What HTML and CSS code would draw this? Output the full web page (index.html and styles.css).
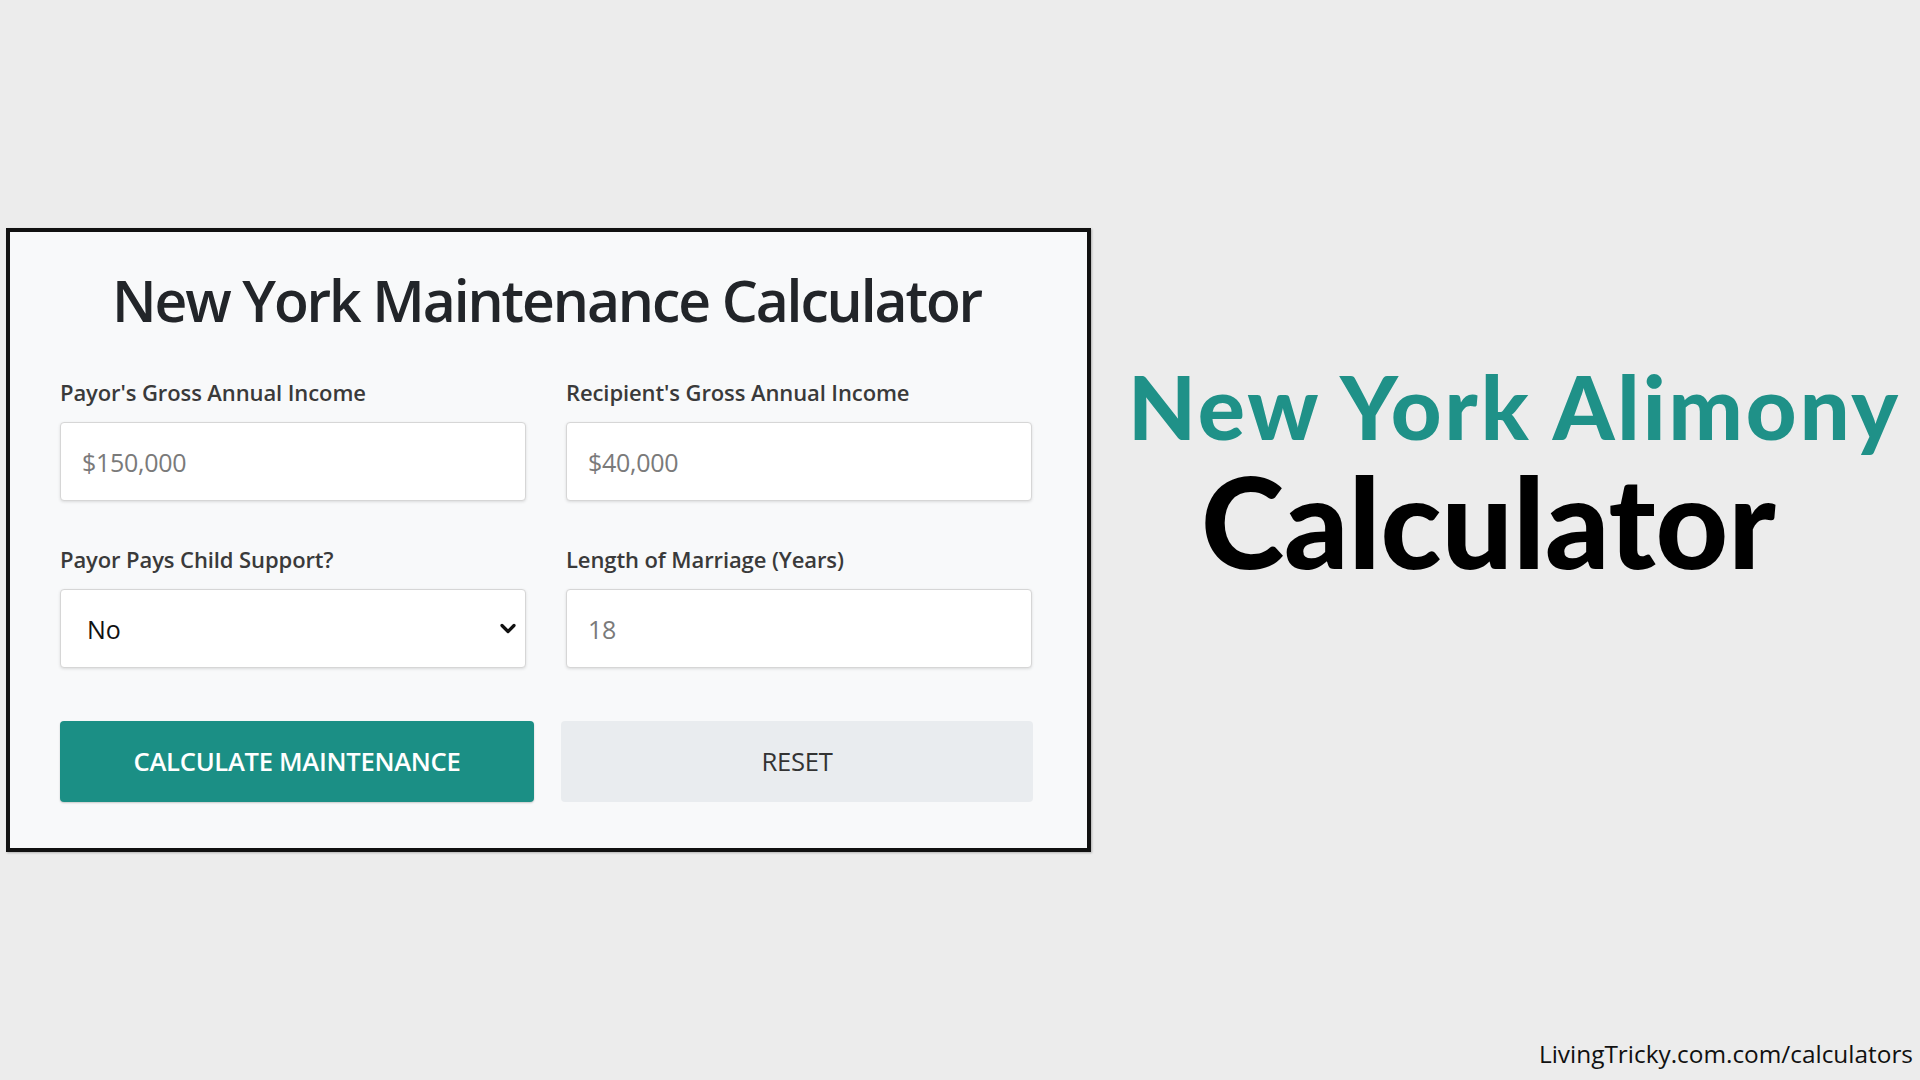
FILE: index.html
```html
<!DOCTYPE html>
<html lang="en">
<head>
<meta charset="utf-8">
<title>New York Alimony Calculator</title>
<link rel="stylesheet" href="styles.css">
</head>
<body>
<div class="page">
  <div class="stage">
    <div class="card">
      <h1 class="card-title">New York Maintenance Calculator</h1>
      <div class="fields">
        <div class="field">
          <label class="label">Payor's Gross Annual Income</label>
          <div class="input"><span class="placeholder">$150,000</span></div>
        </div>
        <div class="field">
          <label class="label">Recipient's Gross Annual Income</label>
          <div class="input"><span class="placeholder">$40,000</span></div>
        </div>
        <div class="field">
          <label class="label">Payor Pays Child Support?</label>
          <div class="input select">
            <span class="value">No</span>
            <svg class="chevron" width="20" height="12" viewBox="0 0 20 12"><path d="M4 2.5 L10 8.5 L16 2.5" fill="none" stroke="#111" stroke-width="3.2" stroke-linecap="round" stroke-linejoin="round"/></svg>
          </div>
        </div>
        <div class="field">
          <label class="label">Length of Marriage (Years)</label>
          <div class="input"><span class="placeholder">18</span></div>
        </div>
      </div>
      <div class="buttons">
        <div class="btn btn-primary">CALCULATE MAINTENANCE</div>
        <div class="btn btn-secondary">RESET</div>
      </div>
    </div>
    <div class="headline">
      <div class="headline-top">New York Alimony</div>
      <div class="headline-bottom">Calculator</div>
    </div>
  </div>
  <div class="footer">LivingTricky.com.com/calculators</div>
</div>
</body>
</html>
```

FILE: styles.css
```css
* { box-sizing: border-box; }
html, body { margin: 0; padding: 0; }
body {
  background: #ececec;
  font-family: "Open Sans", "Noto Sans", sans-serif;
  width: 1920px;
  height: 1080px;
  overflow: hidden;
}
.page {
  height: 1080px;
  display: flex;
  flex-direction: column;
}
.stage {
  display: flex;
  align-items: flex-start;
  padding-top: 228px;
  padding-left: 6px;
}
.card {
  width: 1085px;
  height: 624px;
  border: 4px solid #111;
  background: #f8f9fa;
  box-shadow: 1px 1px 2px rgba(0,0,0,0.25);
  padding: 34px 54px 0 50px;
}
.card-title {
  margin: 0;
  font-size: 57px;
  line-height: 68px;
  font-weight: 600;
  color: #222529;
  text-align: center;
  letter-spacing: -2.1px;
}
.fields {
  margin-top: 44px;
  display: grid;
  grid-template-columns: 466px 466px;
  column-gap: 40px;
  row-gap: 44px;
}
.field { display: flex; flex-direction: column; }
.label {
  font-size: 22px;
  line-height: 28px;
  font-weight: 600;
  color: #3a3a3a;
  margin-bottom: 16px;
  letter-spacing: -0.1px;
}
.input {
  height: 79px;
  background: #fff;
  border: 1px solid #d6d6d6;
  border-radius: 4px;
  box-shadow: 0 1px 3px rgba(0,0,0,0.12);
  display: flex;
  align-items: center;
  padding-left: 21px;
}
.placeholder {
  font-size: 25px;
  color: #7a7a7a;
  letter-spacing: -0.3px;
}
.select { position: relative; padding-left: 26px; }
.value {
  font-size: 25px;
  color: #111;
}
.chevron {
  position: absolute;
  right: 7px;
  top: 33px;
}
.buttons {
  margin-top: 53px;
  display: grid;
  grid-template-columns: 474px 472px;
  column-gap: 27px;
}
.btn {
  height: 81px;
  border-radius: 4px;
  display: flex;
  align-items: center;
  justify-content: center;
  font-size: 25.6px;
  font-weight: 600;
  letter-spacing: -0.3px;
}
.btn-primary {
  background: #1b8f85;
  color: #fff;
  box-shadow: 0 1px 2px rgba(0,0,0,0.2);
}
.btn-secondary {
  background: #e9ecef;
  color: #333;
  font-weight: 500;
}
.headline {
  margin-top: 130px;
  display: flex;
  flex-direction: column;
  font-family: "Lato", "Noto Sans", sans-serif;
  font-weight: 900;
}
.headline-top {
  margin-left: 37px;
  font-size: 88px;
  line-height: 96px;
  color: #1f9188;
  letter-spacing: 3px;
  white-space: nowrap;
}
.headline-bottom {
  margin-left: 110px;
  font-size: 126px;
  line-height: 134px;
  color: #000;
  white-space: nowrap;
}
.footer {
  margin-top: auto;
  padding: 0 7px 11px 0;
  text-align: right;
  font-size: 24.4px;
  line-height: 30px;
  color: #111;
}
```
